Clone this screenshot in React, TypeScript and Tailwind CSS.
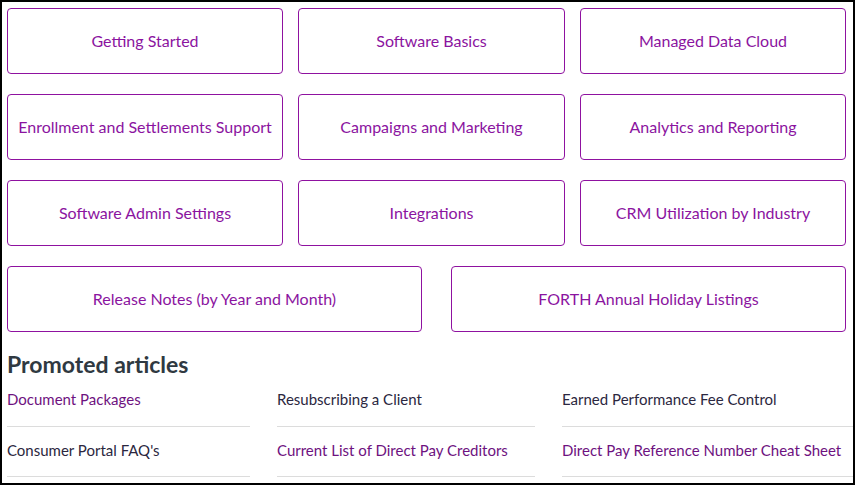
const categories = [
  "Getting Started",
  "Software Basics",
  "Managed Data Cloud",
  "Enrollment and Settlements Support",
  "Campaigns and Marketing",
  "Analytics and Reporting",
  "Software Admin Settings",
  "Integrations",
  "CRM Utilization by Industry",
]

const wide = ["Release Notes (by Year and Month)", "FORTH Annual Holiday Listings"]

// visited links render purple, the rest dark
const articles = [
  [
    { label: "Document Packages", visited: true },
    { label: "Consumer Portal FAQ's", visited: false },
  ],
  [
    { label: "Resubscribing a Client", visited: false },
    { label: "Current List of Direct Pay Creditors", visited: true },
  ],
  [
    { label: "Earned Performance Fee Control", visited: false },
    { label: "Direct Pay Reference Number Cheat Sheet", visited: true },
  ],
]

function Block({ label }: { label: string }) {
  return (
    <a
      href="#"
      className="flex h-[66px] items-center justify-center rounded-[4px] border border-[#8f12a0] text-center text-[16px] text-[#8b14a0]"
    >
      {label}
    </a>
  )
}

export default function App() {
  return (
    <div
      className="h-[485px] w-[855px] overflow-hidden border-2 border-black bg-white px-[5px] pt-[6px]"
      style={{ fontFamily: "Lato, 'Liberation Sans', sans-serif" }}
    >
      <div className="grid grid-cols-[276px_267px_266px] gap-x-[15px] gap-y-[20px]">
        {categories.map((c) => (
          <Block key={c} label={c} />
        ))}
      </div>
      <div className="mt-[20px] grid grid-cols-[415px_395px] gap-x-[29px]">
        {wide.map((c) => (
          <Block key={c} label={c} />
        ))}
      </div>

      <h2 className="mt-[18px] h-[28px] text-[23px] font-bold leading-[28px] text-[#2f3941]">
        Promoted articles
      </h2>
      <div className="grid grid-cols-[243px_258px_1fr] gap-x-[27px] -mr-[10px]">
        {articles.map((col, i) => (
          <ul key={i}>
            {col.map((a, j) => (
              <li
                key={a.label}
                className={`border-b border-[#dcdcdc] ${j === 0 ? "pt-[11px] pb-[17px]" : "pt-[13px] pb-[16px]"}`}
              >
                <a
                  href="#"
                  className={`block whitespace-nowrap text-[15px] leading-[20px] ${
                    a.visited ? "text-[#6e1280]" : "text-[#2b2740]"
                  }`}
                >
                  {a.label}
                </a>
              </li>
            ))}
          </ul>
        ))}
      </div>
    </div>
  )
}
